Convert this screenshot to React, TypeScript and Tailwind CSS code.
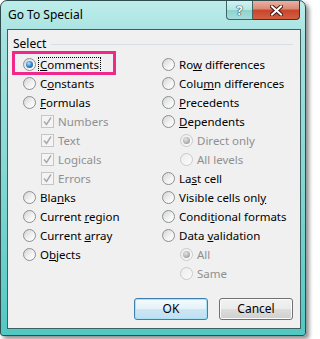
import React from 'react';

type Item = {
  label: string;
  u?: number;
  kind?: 'radio' | 'check';
  checked?: boolean;
  disabled?: boolean;
  indent?: boolean;
  focus?: boolean;
};

const left: Item[] = [
  { label: 'Comments', u: 0, checked: true, focus: true },
  { label: 'Constants', u: 1 },
  { label: 'Formulas', u: 0 },
  { label: 'Numbers', kind: 'check', checked: true, disabled: true, indent: true },
  { label: 'Text', kind: 'check', checked: true, disabled: true, indent: true },
  { label: 'Logicals', kind: 'check', checked: true, disabled: true, indent: true },
  { label: 'Errors', kind: 'check', checked: true, disabled: true, indent: true },
  { label: 'Blanks', u: 3 },
  { label: 'Current region', u: 8 },
  { label: 'Current array', u: 8 },
  { label: 'Objects', u: 1 },
];

const right: Item[] = [
  { label: 'Row differences', u: 2 },
  { label: 'Column differences', u: 4 },
  { label: 'Precedents', u: 0 },
  { label: 'Dependents', u: 0 },
  { label: 'Direct only', checked: true, disabled: true, indent: true },
  { label: 'All levels', disabled: true, indent: true },
  { label: 'Last cell', u: 2 },
  { label: 'Visible cells only', u: 17 },
  { label: 'Conditional formats', u: 5 },
  { label: 'Data validation', u: 5 },
  { label: 'All', checked: true, disabled: true, indent: true },
  { label: 'Same', disabled: true, indent: true },
];

function Label({ text, u, disabled }: { text: string; u?: number; disabled?: boolean }) {
  if (u === undefined || disabled) return <>{text}</>;
  return (
    <>
      {text.slice(0, u)}
      <span className="underline underline-offset-[1px]">{text[u]}</span>
      {text.slice(u + 1)}
    </>
  );
}

function Radio({ checked, disabled }: { checked?: boolean; disabled?: boolean }) {
  return (
    <span
      className={`flex h-[13px] w-[13px] shrink-0 items-center justify-center rounded-full border ${
        disabled
          ? 'border-[#c9cacb] bg-[linear-gradient(135deg,#ececec,#fbfbfb)]'
          : 'border-[#8c8e90] bg-[linear-gradient(135deg,#d3d4d5,#f4f4f4_60%,#ffffff)]'
      }`}
    >
      {checked && (
        <span
          className={`h-[7px] w-[7px] rounded-full ${
            disabled
              ? 'bg-[radial-gradient(circle_at_40%_35%,#e4e4e4,#a6a6a6_70%)]'
              : 'bg-[radial-gradient(circle_at_40%_35%,#b9e3ff,#3a8ed0_45%,#134f87_90%)]'
          }`}
        />
      )}
    </span>
  );
}

function Check() {
  return (
    <span className="flex h-[13px] w-[13px] shrink-0 items-center justify-center border border-[#c4c5c6] bg-[#f4f4f4]">
      <svg width="9" height="9" viewBox="0 0 9 9">
        <path d="M1 4.5 L3.5 7.5 L8 0.5" fill="none" stroke="#a8a8a8" strokeWidth="1.4" />
      </svg>
    </span>
  );
}

function Row({ item }: { item: Item }) {
  return (
    <div className={`flex h-[19px] items-center ${item.indent ? 'pl-[18px]' : ''}`}>
      {item.kind === 'check' ? <Check /> : <Radio checked={item.checked} disabled={item.disabled} />}
      <span
        className={`ml-[3px] whitespace-nowrap text-[11.5px] leading-[14px] ${item.disabled ? 'text-[#8f8f8f]' : 'text-black'} ${
          item.focus ? 'outline outline-1 outline-dotted outline-black px-px' : 'px-px'
        }`}
      >
        <Label text={item.label} u={item.u} disabled={item.disabled} />
      </span>
    </div>
  );
}

function DlgButton({ children, primary }: { children: React.ReactNode; primary?: boolean }) {
  return (
    <button
      className={`flex h-[22px] w-[74px] items-center justify-center rounded-[3px] border text-black ${
        primary
          ? 'border-[#3c7fb1] bg-[linear-gradient(180deg,#f4fbfe,#e4f2fa_50%,#cde6f4_51%,#bfdff1)] shadow-[inset_0_0_0_1px_#a9e2f7]'
          : 'border-[#707070] bg-[linear-gradient(180deg,#f2f2f2,#ebebeb_50%,#dddddd_51%,#cfcfcf)] shadow-[inset_0_0_0_1px_#fcfcfc]'
      }`}
    >
      {children}
    </button>
  );
}

export default function App() {
  return (
    <div className="h-[339px] w-[313px] bg-white font-['Segoe_UI','Noto_Sans',sans-serif] text-[12px]">
      <div className="flex h-[336px] w-[306px] flex-col rounded-t-[7px] rounded-b-[3px] border border-[#2e4d4f] bg-[linear-gradient(180deg,#bdedeb_0%,#a3e1df_12%,#86d8d4_50%,#52c8c3_100%)] pb-[6px] pl-[6px] pr-[4px] shadow-[3px_3px_4px_rgba(0,0,0,0.45)]">
        <div className="flex h-[28px] items-start">
          <span className="pl-[1px] pt-[6px] text-[12px] leading-[16px] text-black">Go To Special</span>
          <div className="ml-auto mr-[1px] flex">
            <div className="flex h-[19px] w-[27px] items-center justify-center rounded-bl-[4px] border border-t-0 border-[#3f6466] bg-[linear-gradient(180deg,#d2f3f2,#b3e6e4_50%,#8fd2cf_51%,#a5dedb)]">
              <span className="text-[13px] font-bold leading-none text-white [text-shadow:0_0_1px_#1f3a3b,0_0_1px_#1f3a3b,0_0_1px_#1f3a3b]">?</span>
            </div>
            <div className="flex h-[19px] w-[47px] items-center justify-center rounded-br-[4px] border border-l-0 border-t-0 border-[#5a2a22] bg-[linear-gradient(180deg,#eab0a2,#d98a75_45%,#c8452c_50%,#d45e40)]">
              <svg width="13" height="11" viewBox="0 0 13 11">
                <path d="M2 1.5 L11 9.5 M11 1.5 L2 9.5" stroke="#3a1a14" strokeWidth="4" strokeLinecap="square" />
                <path d="M2 1.5 L11 9.5 M11 1.5 L2 9.5" stroke="#ffffff" strokeWidth="2" strokeLinecap="square" />
              </svg>
            </div>
          </div>
        </div>

        <div className="relative flex flex-1 flex-col border border-[#3e5f60] bg-[#f0f0f0]">
          <div className="mt-[6px] flex h-[16px] items-center pl-[5px] pr-[7px]">
            <span className="leading-[16px] text-black">Select</span>
            <div className="ml-[5px] h-px flex-1 bg-[#d5dfe5]" />
          </div>

          <div className="mt-[3px] grid grid-cols-[139px_1fr] pl-[15px]">
            <div className="flex flex-col">
              {left.map((it) => (
                <Row key={it.label} item={it} />
              ))}
            </div>
            <div className="flex flex-col">
              {right.map((it, i) => (
                <Row key={it.label + i} item={it} />
              ))}
            </div>
          </div>

          <div className="mt-auto flex justify-end gap-[11px] pb-[8px] pr-[7px]">
            <DlgButton primary>OK</DlgButton>
            <DlgButton>Cancel</DlgButton>
          </div>

          <div className="absolute left-[4px] top-[21px] h-[24px] w-[104px] border-[3px] border-[#f0288c]" />
        </div>
      </div>
    </div>
  );
}
